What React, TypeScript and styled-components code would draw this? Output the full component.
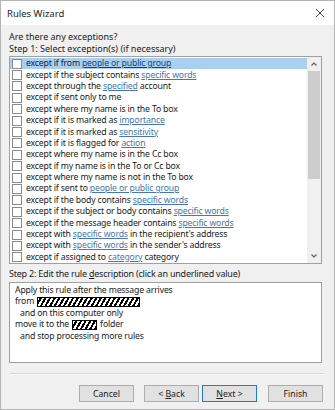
import React from "react";
import styled, { createGlobalStyle } from "styled-components";

const GlobalStyle = createGlobalStyle`
	html, body {
		margin: 0;
		padding: 0;
		background: #f0f0f0;
	}
	body {
		font-family: "Noto Sans", "Open Sans", sans-serif;
		color: #1b1b1b;
	}
`;

type Part = { text: string; link?: boolean };

const exceptions: Part[][] = [
	[{ text: "except if from " }, { text: "people or public group", link: true }],
	[{ text: "except if the subject contains " }, { text: "specific words", link: true }],
	[{ text: "except through the " }, { text: "specified", link: true }, { text: " account" }],
	[{ text: "except if sent only to me" }],
	[{ text: "except where my name is in the To box" }],
	[{ text: "except if it is marked as " }, { text: "importance", link: true }],
	[{ text: "except if it is marked as " }, { text: "sensitivity", link: true }],
	[{ text: "except if it is flagged for " }, { text: "action", link: true }],
	[{ text: "except where my name is in the Cc box" }],
	[{ text: "except if my name is in the To or Cc box" }],
	[{ text: "except where my name is not in the To box" }],
	[{ text: "except if sent to " }, { text: "people or public group", link: true }],
	[{ text: "except if the body contains " }, { text: "specific words", link: true }],
	[{ text: "except if the subject or body contains " }, { text: "specific words", link: true }],
	[{ text: "except if the message header contains " }, { text: "specific words", link: true }],
	[{ text: "except with " }, { text: "specific words", link: true }, { text: " in the recipient's address" }],
	[{ text: "except with " }, { text: "specific words", link: true }, { text: " in the sender's address" }],
	[{ text: "except if assigned to " }, { text: "category", link: true }, { text: " category" }],
];

export default function App() {
	return (
		<>
			<GlobalStyle />
			<Window>
				<TitleBar>
					<Title>Rules Wizard</Title>
					<CloseIcon viewBox="0 0 10 10">
						<path d="M1 1 L9 9 M9 1 L1 9" stroke="#333" strokeWidth="0.9" fill="none" />
					</CloseIcon>
				</TitleBar>
				<Body>
					<Label>Are there any exceptions?</Label>
					<Label>Step 1: Select exception(s) (if necessary)</Label>
					<ListBox>
						<Rows>
							{exceptions.map((parts, i) => (
								<Row key={i} selected={i === 0}>
									<Check />
									<RowText>
										{parts.map((p, j) =>
											p.link ? (
												<Link key={j} strong={i === 0}>
													{p.text}
												</Link>
											) : (
												<span key={j}>{p.text}</span>
											)
										)}
									</RowText>
								</Row>
							))}
						</Rows>
						<ScrollBar>
							<Arrow viewBox="0 0 8 6">
								<path d="M1.5 4.5 L4 2 L6.5 4.5" stroke="#606060" strokeWidth="1.2" fill="none" />
							</Arrow>
							<Track>
								<Thumb />
							</Track>
							<Arrow viewBox="0 0 8 6">
								<path d="M1.5 1.5 L4 4 L6.5 1.5" stroke="#606060" strokeWidth="1.2" fill="none" />
							</Arrow>
						</ScrollBar>
					</ListBox>
					<StepLabel>
						Step 2: Edit the rule <u>d</u>escription (click an underlined value)
					</StepLabel>
					<DescBox>
						<DescLine>Apply this rule after the message arrives</DescLine>
						<DescLine>
							from <Hatch width={103} />
						</DescLine>
						<DescLine indent>and on this computer only</DescLine>
						<DescLine>
							move it to the <Hatch width={25} /> folder
						</DescLine>
						<DescLine indent>and stop processing more rules</DescLine>
					</DescBox>
				</Body>
				<Separator />
				<Buttons>
					<Button>Cancel</Button>
					<Button style={{ marginLeft: 10 }}>
						&lt; <u>B</u>ack
					</Button>
					<Button primary style={{ marginLeft: 3 }}>
						<u>N</u>ext &gt;
					</Button>
					<Button style={{ marginLeft: 11 }}>Finish</Button>
				</Buttons>
			</Window>
		</>
	);
}

const Window = styled.div`
	box-sizing: border-box;
	width: 335px;
	height: 410px;
	border: 1px solid #b4b4b4;
	background: #f0f0f0;
	display: flex;
	flex-direction: column;
`;

const TitleBar = styled.div`
	height: 24px;
	background: #ffffff;
	display: flex;
	align-items: center;
	justify-content: space-between;
	padding: 0 9px 0 6px;
`;

const Title = styled.div`
	font-size: 9.5px;
	color: #222;
`;

const CloseIcon = styled.svg`
	width: 10px;
	height: 10px;
`;

const Body = styled.div`
	padding: 6px 12px 0 8px;
	display: flex;
	flex-direction: column;
`;

const Label = styled.div`
	font-size: 9px;
	line-height: 12px;
	height: 12px;
	white-space: nowrap;
`;

const ListBox = styled.div`
	margin-top: 1px;
	height: 208px;
	box-sizing: border-box;
	border: 1px solid #a0a0a0;
	background: #ffffff;
	display: flex;
`;

const Rows = styled.div`
	flex: 1;
	padding-top: 1px;
	overflow: hidden;
`;

const Row = styled.div<{ selected?: boolean }>`
	height: 11.4px;
	display: flex;
	align-items: center;
	padding-left: 2px;
	background: ${(p) => (p.selected ? "#a9d0f3" : "transparent")};
	white-space: nowrap;
`;

const Check = styled.div`
	width: 8px;
	height: 8px;
	border: 1px solid #8a8a8a;
	background: #fff;
	flex-shrink: 0;
`;

const RowText = styled.div`
	margin-left: 4px;
	font-size: 8.7px;
	letter-spacing: -0.17px;
	line-height: 11px;
`;

const Link = styled.span<{ strong?: boolean }>`
	color: ${(p) => (p.strong ? "#1f3f6a" : "#4677b0")};
	text-decoration: underline;
`;

const ScrollBar = styled.div`
	width: 14px;
	background: #f0f0f0;
	display: flex;
	flex-direction: column;
	align-items: center;
`;

const Arrow = styled.svg`
	width: 8px;
	height: 6px;
	margin: 4px 0;
	flex-shrink: 0;
`;

const Track = styled.div`
	flex: 1;
	width: 100%;
	padding: 0 1px;
	box-sizing: border-box;
`;

const Thumb = styled.div`
	height: 108px;
	background: #cdcdcd;
`;

const StepLabel = styled(Label)`
	margin-top: 4px;
	margin-bottom: 2px;
	letter-spacing: -0.22px;
`;

const DescBox = styled.div`
	height: 81px;
	box-sizing: border-box;
	border: 1px solid #a0a0a0;
	background: #ffffff;
	padding: 2px 5px;
`;

const DescLine = styled.div<{ indent?: boolean }>`
	font-size: 8.7px;
	letter-spacing: -0.17px;
	line-height: 11.4px;
	height: 11.4px;
	padding-left: ${(p) => (p.indent ? "5px" : "0")};
	white-space: nowrap;
	display: flex;
	align-items: center;
	gap: 3px;
`;

const Hatch = styled.span<{ width: number }>`
	display: inline-block;
	width: ${(p) => p.width}px;
	height: 10px;
	box-sizing: border-box;
	border: 1px solid #000;
	background: repeating-linear-gradient(
		-60deg,
		#000 0px,
		#000 2px,
		#fff 2px,
		#fff 4px
	);
`;

const Separator = styled.div`
	margin: 10px 10px 0 9px;
	height: 0;
	border-top: 1px solid #d4d4d4;
	border-bottom: 1px solid #ffffff;
`;

const Buttons = styled.div`
	display: flex;
	justify-content: flex-end;
	padding: 10px 11px 0 0;
`;

const Button = styled.button<{ primary?: boolean }>`
	width: 55px;
	height: 17px;
	padding: 0;
	font-family: "Noto Sans", "Open Sans", sans-serif;
	font-size: 8.7px;
	color: #222;
	background: #e1e1e1;
	border: 1px solid ${(p) => (p.primary ? "#1e7bd6" : "#adadad")};
	box-shadow: ${(p) => (p.primary ? "inset 0 0 0 1px #e1e1e1" : "none")};
`;
